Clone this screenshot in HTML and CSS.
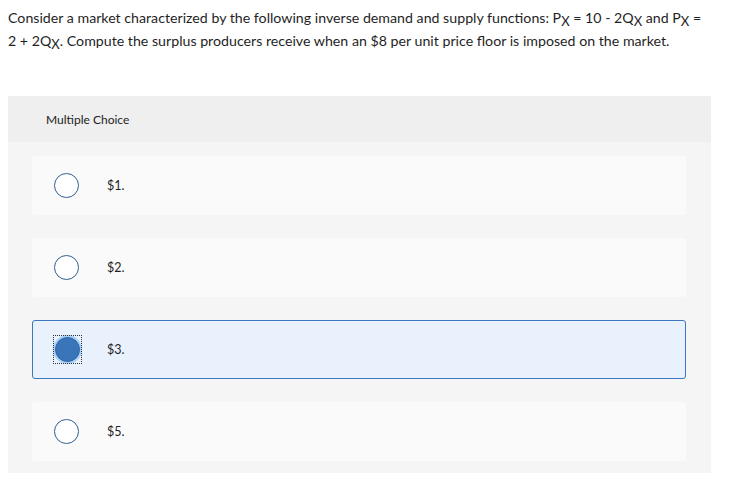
FILE: index.html
```html
<!DOCTYPE html>
<html>
<head>
<meta charset="utf-8">
<link rel="stylesheet" href="styles.css">
</head>
<body>
<p class="question">Consider a market characterized by the following inverse demand and supply functions: P<span class="sub">X</span> = 10 - 2Q<span class="sub">X</span> and P<span class="sub">X</span> = 2&nbsp;+&nbsp;2Q<span class="sub">X</span>. Compute the surplus producers receive when an $8 per unit price floor is imposed on the market.</p>
<div class="panel">
  <div class="panel-head">Multiple Choice</div>
  <div class="options">
    <div class="option"><span class="radio"></span><span class="label">$1.</span></div>
    <div class="option"><span class="radio"></span><span class="label">$2.</span></div>
    <div class="option selected"><span class="focus"><span class="radio"></span></span><span class="label">$3.</span></div>
    <div class="option"><span class="radio"></span><span class="label">$5.</span></div>
  </div>
</div>
</body>
</html>
```
FILE: styles.css
```css
html, body { margin: 0; padding: 0; background: #fff; }
body {
  padding: 6px 8px 0 8px;
  font-family: Lato, "Open Sans", sans-serif;
  color: #1f1f1f;
  width: 703px;
}
.question {
  margin: 0;
  font-size: 14.2px;
  line-height: 23px;
  width: 703px;
}
.sub {
  font-size: 0.92em;
  line-height: 1;
  vertical-align: -3px;
}
.panel {
  margin-top: 44px;
  background: #f5f5f5;
  padding-bottom: 12px;
}
.panel-head {
  background: #efefef;
  height: 46px;
  display: flex;
  align-items: center;
  padding-left: 38px;
  font-size: 12px;
  color: #222;
}
.options {
  display: flex;
  flex-direction: column;
  gap: 23px;
  padding: 14px 25px 0 24px;
}
.option {
  height: 59px;
  background: #fafafa;
  border-radius: 3px;
  display: flex;
  align-items: center;
  padding-left: 22px;
  box-sizing: border-box;
  font-size: 12.5px;
}
.option.selected {
  background: #e9f2fc;
  border: 1px solid #3b77c0;
  padding-left: 21px;
}
.radio {
  width: 25px;
  height: 25px;
  box-sizing: border-box;
  border: 1.5px solid #2f5f92;
  border-radius: 50%;
  background: #fff;
  flex: none;
  display: block;
}
.focus {
  display: block;
  padding: 1px;
  outline: 1px dotted #333;
  flex: none;
}
.selected .radio {
  background: #3a74b9;
  border-color: #2f64a6;
  box-shadow: 0 0 0 2px #a8d1f7;
}
.label {
  margin-left: 28px;
}
.selected .label { margin-left: 26px; }
```
